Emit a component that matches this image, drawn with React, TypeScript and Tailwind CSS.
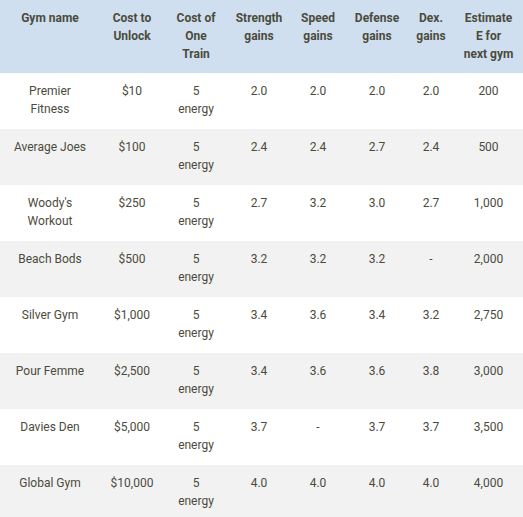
import React from "react";

interface Gym {
  name: string;
  cost: string;
  str: string;
  spd: string;
  def: string;
  dex: string;
  est: string;
}

const gyms: Gym[] = [
  { name: "Premier Fitness", cost: "$10", str: "2.0", spd: "2.0", def: "2.0", dex: "2.0", est: "200" },
  { name: "Average Joes", cost: "$100", str: "2.4", spd: "2.4", def: "2.7", dex: "2.4", est: "500" },
  { name: "Woody's Workout", cost: "$250", str: "2.7", spd: "3.2", def: "3.0", dex: "2.7", est: "1,000" },
  { name: "Beach Bods", cost: "$500", str: "3.2", spd: "3.2", def: "3.2", dex: "-", est: "2,000" },
  { name: "Silver Gym", cost: "$1,000", str: "3.4", spd: "3.6", def: "3.4", dex: "3.2", est: "2,750" },
  { name: "Pour Femme", cost: "$2,500", str: "3.4", spd: "3.6", def: "3.6", dex: "3.8", est: "3,000" },
  { name: "Davies Den", cost: "$5,000", str: "3.7", spd: "-", def: "3.7", dex: "3.7", est: "3,500" },
  { name: "Global Gym", cost: "$10,000", str: "4.0", spd: "4.0", def: "4.0", dex: "4.0", est: "4,000" },
];

// width + horizontal padding per column
const cols = [
  "w-[100px] px-[10px]",
  "w-[64px] px-[8px]",
  "w-[64px] px-[10px]",
  "w-[62px] px-[4px]",
  "w-[56px] px-[4px]",
  "w-[62px] px-[4px]",
  "w-[46px] px-[4px]",
  "w-[69px] px-[9px]",
];

const headers = ["Gym name", "Cost to Unlock", "Cost of One Train", "Strength gains", "Speed gains", "Defense gains", "Dex. gains", "Estimate E for next gym"];

const App = () => {
  return (
    <div className="w-[523px] h-[517px] overflow-hidden bg-white font-['Roboto',sans-serif] text-[12px] leading-[18px] text-[#4b4b3c]">
      <table className="w-[523px] table-fixed border-collapse text-center">
        <thead>
          <tr className="bg-[#cfdff0]">
            {headers.map((h, i) => (
              <th key={h} className={`${cols[i]} h-[73px] pt-[9px] pb-[10px] align-top font-bold`}>
                {h}
              </th>
            ))}
          </tr>
        </thead>
        <tbody>
          {gyms.map((g, idx) => {
            const cells = [g.name, g.cost, "5 energy", g.str, g.spd, g.def, g.dex, g.est];
            return (
              <tr key={g.name} className={idx % 2 === 0 ? "bg-white" : "bg-[#f2f2f2]"}>
                {cells.map((c, i) => (
                  <td key={i} className={`${cols[i]} h-[56px] pt-[9px] pb-[11px] align-top`}>
                    {c}
                  </td>
                ))}
              </tr>
            );
          })}
        </tbody>
      </table>
    </div>
  );
};

export default App;
